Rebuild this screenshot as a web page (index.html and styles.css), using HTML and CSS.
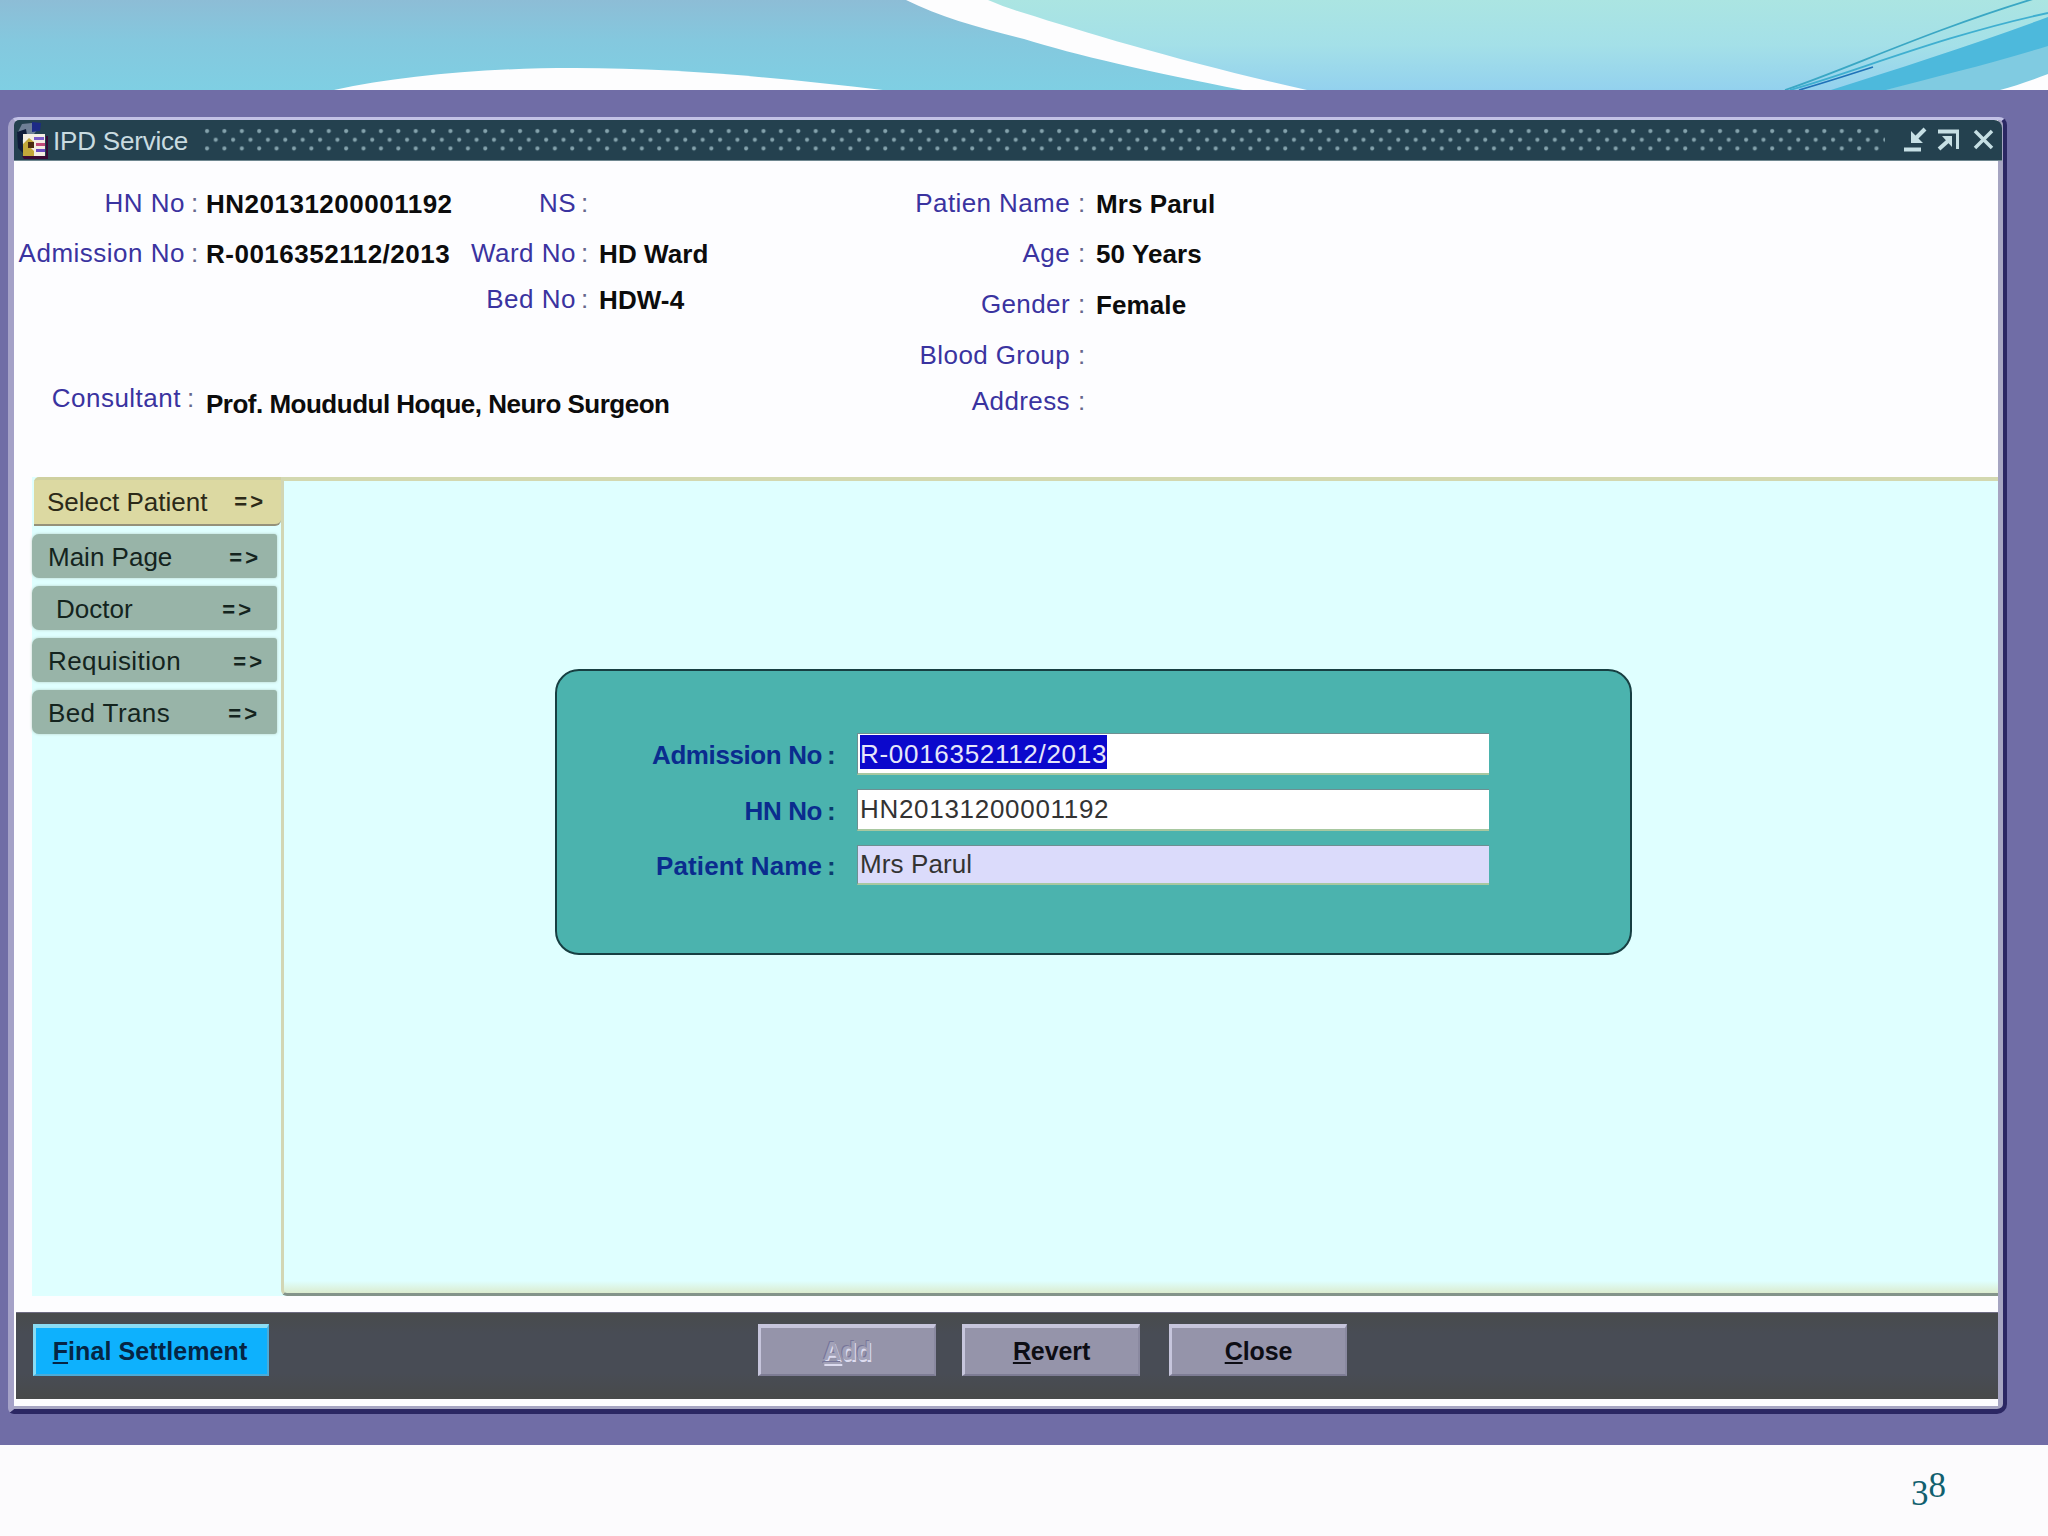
FILE: index.html
```html
<!DOCTYPE html>
<html lang="en">
<head>
    <meta charset="UTF-8">
    <title>IPD Service</title>
    <link rel="stylesheet" href="styles.css">
</head>
<body>
<!-- Slide banner -->
<svg class="banner" viewBox="0 0 2048 90" preserveAspectRatio="none">
    <defs>
        <linearGradient id="sea" x1="0" y1="0" x2="0" y2="1">
            <stop offset="0" stop-color="#8dbdd6"/>
            <stop offset="0.45" stop-color="#84c8de"/>
            <stop offset="1" stop-color="#7fcfe3"/>
        </linearGradient>
        <linearGradient id="sky" x1="0" y1="0" x2="0" y2="1">
            <stop offset="0" stop-color="#abe5e2"/>
            <stop offset="0.5" stop-color="#a4e0e8"/>
            <stop offset="1" stop-color="#93d1ee"/>
        </linearGradient>
    </defs>
    <rect width="2048" height="90" fill="url(#sea)"/>
    <path d="M906 0 C940 17 980 28 1024 39 C1075 55 1150 72 1243 90 H1310 V0 Z" fill="#fdfdfe"/>
    <path d="M988 0 C1000 5 1010 9 1024 13 C1090 34 1190 64 1307 90 H2048 V0 Z" fill="url(#sky)"/>
    <path d="M334 90 C400 76 480 68 575 68 C680 68 780 78 883 90 Z" fill="#fdfdfe"/>
    <path d="M1886 90 C1935 75 1990 62 2048 43 V90 Z" fill="#80cbe1"/>
    <path d="M1831 90 C1900 68 1975 44 2048 17 V46 C1990 64 1935 77 1886 90 Z" fill="#4db9dc"/>
    <path d="M2000 90 C2015 86 2030 81 2048 74 V90 Z" fill="#fdfdfe"/>
    <path d="M1785 90 C1845 70 1925 32 2033 -1" fill="none" stroke="#3aa7c4" stroke-width="1.8"/>
    <path d="M1790 90 C1850 74 1940 36 2048 13" fill="none" stroke="#3fafd0" stroke-width="1.8"/>
    <path d="M1799 90 C1820 84 1845 76 1873 67" fill="none" stroke="#1f72b8" stroke-width="1.8"/>
</svg>

<div class="desktop">
    <div class="window">
        <div class="title-bar">
            <svg class="app-icon" viewBox="0 0 36 40">
                <path d="M3 14 L8 4 L18 3 L24 9 L20 14 L8 18 Z" fill="#6f7f96"/>
                <path d="M18 2 L27 3 L26 11 L18 12 Z" fill="#1c2a86"/>
                <path d="M3 12 L12 9 L13 15 L8 20 L10 34 L4 28 Z" fill="#101c3a"/>
                <rect x="9" y="14" width="22" height="22" fill="#f4eee2"/>
                <path d="M9 36 V24 L15 18 L20 22 L15 26 L20 31 L20 36 Z" fill="#c2a83a"/>
                <path d="M14 22 h6 v6 h-6 z" fill="#4a2a10"/>
                <rect x="20" y="17" width="10" height="3" fill="#7a5ac8"/>
                <rect x="22" y="23" width="9" height="3" fill="#c04a78"/>
                <rect x="22" y="29" width="9" height="3" fill="#6a4ac0"/>
                <path d="M8 36 h24 v-20 h2 v23 h-24 z" fill="#3a0a34"/>
            </svg>
            <span class="title-text">IPD Service</span>
            <span class="title-dots"></span>
            <svg class="win-controls" viewBox="0 0 96 28">
                <g fill="none" stroke="#c6dfe4">
                    <path d="M25 2 L14 13" stroke-width="4"/>
                    <path d="M4 22.500 H21" stroke-width="4"/>
                    <path d="M38 4.500 H59" stroke-width="4"/>
                    <path d="M57.500 4 V22" stroke-width="3"/>
                    <path d="M39 22 L48 14" stroke-width="4"/>
                    <path d="M75 4 L92 21 M92 4 L75 21" stroke-width="3.500"/>
                </g>
                <path d="M11 4 V16 H23 Z M42 9 H52 V20 Z" fill="#c6dfe4"/>
            </svg>
        </div>

        <!-- Patient summary -->
        <div class="info">
            <div class="info-col info-left">
                <div class="field"><span class="name">HN No</span><span class="colon">:</span><span class="value">HN20131200001192</span></div>
                <div class="field"><span class="name">Admission No</span><span class="colon">:</span><span class="value">R-0016352112/2013</span></div>
                <div class="field consultant"><span class="name">Consultant</span><span class="colon">:</span><span class="value">Prof. Moududul Hoque, Neuro Surgeon</span></div>
            </div>
            <div class="info-col info-mid">
                <div class="field"><span class="name">NS</span><span class="colon">:</span></div>
                <div class="field"><span class="name">Ward No</span><span class="colon">:</span><span class="value">HD Ward</span></div>
                <div class="field bed"><span class="name">Bed No</span><span class="colon">:</span><span class="value">HDW-4</span></div>
            </div>
            <div class="info-col info-right">
                <div class="field"><span class="name">Patien Name</span><span class="colon">:</span><span class="value">Mrs Parul</span></div>
                <div class="field"><span class="name">Age</span><span class="colon">:</span><span class="value">50 Years</span></div>
                <div class="field gender"><span class="name">Gender</span><span class="colon">:</span><span class="value">Female</span></div>
                <div class="field"><span class="name">Blood Group</span><span class="colon">:</span></div>
                <div class="field address"><span class="name">Address</span><span class="colon">:</span></div>
            </div>
        </div>

        <div class="work">
            <div class="sidebar">
                <div class="tab active"><span>Select Patient</span><span class="arrow">=&gt;</span></div>
                <div class="tab main-page"><span>Main Page</span><span class="arrow">=&gt;</span></div>
                <div class="tab doctor"><span>Doctor</span><span class="arrow">=&gt;</span></div>
                <div class="tab requisition"><span>Requisition</span><span class="arrow">=&gt;</span></div>
                <div class="tab bed-trans"><span>Bed Trans</span><span class="arrow">=&gt;</span></div>
            </div>
            <div class="panel">
                <div class="card">
                    <div class="row"><span class="label">Admission No</span><span class="label-colon">:</span><div class="input"><span class="selected">R-0016352112/2013</span></div></div>
                    <div class="row"><span class="label">HN No</span><span class="label-colon">:</span><div class="input">HN20131200001192</div></div>
                    <div class="row last"><span class="label">Patient Name</span><span class="label-colon">:</span><div class="input readonly">Mrs Parul</div></div>
                </div>
            </div>
        </div>

        <div class="actions">
            <div class="btn settle"><span><u>F</u>inal Settlement</span></div>
            <div class="btn add"><span><u>A</u>dd</span></div>
            <div class="btn"><span><u>R</u>evert</span></div>
            <div class="btn"><span><u>C</u>lose</span></div>
        </div>
    </div>
</div>

<div class="page-number"><span class="low">3</span><span>8</span></div>
</body>
</html>
```
FILE: styles.css
```css
* {
    box-sizing: border-box;
}
body {
    margin: 0;
    width: 2048px;
    height: 1536px;
    overflow: hidden;
    background: #fcfbfd;
    font-family: "Liberation Sans", Arial, sans-serif;
    font-size: 26px;
    white-space: nowrap;
}
.banner {
    display: block;
    width: 2048px;
    height: 90px;
}
.desktop {
    height: 1355px;
    padding: 27px 41px 31px 8px;
    background: #706da6;
}
.window {
    display: flex;
    flex-direction: column;
    height: 1297px;
    padding: 0 5px 10px 0;
    border-style: solid;
    border-width: 3px 4px 5px 6px;
    border-color: #c3c2e6 #2b2763 #2b2763 #a5a2c8;
    border-radius: 10px 8px 10px 6px;
    background: linear-gradient(#fdfdff, #fdfdff) 0 0 / calc(100% - 5px) calc(100% - 3px) no-repeat, #a6a5c2;
}

/* Title bar */
.title-bar {
    display: flex;
    align-items: center;
    height: 41px;
    margin-right: -4px;
    padding-right: 6px;
    background: #24414f;
    border-bottom: 1px solid #6f8790;
    border-radius: 5px 8px 0 0;
}
.app-icon {
    width: 36px;
    height: 40px;
    flex: none;
}
.title-text {
    width: 153px;
    padding: 3px 0 0 3px;
    color: #c9dbe0;
    letter-spacing: -0.2px;
}
.title-dots {
    flex: 1;
    height: 27px;
    background:
        radial-gradient(circle at 4px 4px, #85a3ad 0 1.4px, transparent 2.6px) 0 0 / 17.4px 17.4px,
        radial-gradient(circle at 12.7px 12.7px, #85a3ad 0 1.4px, transparent 2.6px) 0 0 / 17.4px 17.4px;
}
.win-controls {
    width: 96px;
    height: 28px;
    margin: 2px 0 0 15px;
}

/* Patient summary */
.info {
    display: flex;
    height: 316px;
    padding-top: 17px;
}
.info-left {
    width: 448px;
}
.info-mid {
    width: 391px;
}
.field {
    display: flex;
    align-items: center;
    height: 50px;
}
.name {
    flex: none;
    color: #3a33a0;
    text-align: right;
    letter-spacing: 0.5px;
}
.info-left .name {
    width: 171px;
}
.info-mid .name {
    width: 114px;
}
.info-right .name {
    width: 217px;
    letter-spacing: 0.4px;
}
.colon {
    flex: none;
    width: 21px;
    padding-left: 6px;
    color: #66668c;
}
.info-mid .colon {
    width: 23px;
    padding-left: 5px;
}
.info-right .colon {
    width: 26px;
    padding-left: 8px;
}
.value {
    padding-top: 2px;
    color: #0c0c0c;
    font-weight: bold;
    letter-spacing: 0.1px;
}
.info-left .value {
    letter-spacing: 0.5px;
}
.info-left .consultant .value {
    padding-top: 13px;
    letter-spacing: -0.5px;
}
.info-left .consultant .name {
    width: 167px;
}
.info-left .consultant .colon {
    width: 25px;
}
.consultant {
    margin-top: 95px;
}
.bed {
    height: 42px;
}
.gender {
    height: 52px;
}
.address {
    height: 42px;
}

/* Tabs and work area */
.work {
    display: flex;
    height: 819px;
    margin-left: 18px;
    background: #dfffff;
}
.sidebar {
    width: 249px;
}
.tab {
    display: flex;
    align-items: center;
    justify-content: space-between;
    width: 245px;
    height: 44px;
    margin-bottom: 8px;
    padding: 3px 18px 0 16px;
    background: #98b4a8;
    border-radius: 7px 3px 3px 7px;
    box-shadow: 0 0 3px #b5d0c6;
    color: #14241e;
}
.tab.active {
    width: 247px;
    height: 49px;
    margin-left: 2px;
    padding: 0 17px 0 13px;
    background: #dcd9a2;
    border-top: 3px solid #cfd0a0;
    border-bottom: 2px solid #94917a;
    border-radius: 5px 0 6px 0;
    box-shadow: none;
    color: #2c2a18;
}
.tab.doctor {
    padding-left: 24px;
    padding-right: 25px;
}
.tab.requisition {
    padding-right: 14px;
    letter-spacing: 0.4px;
}
.tab.bed-trans {
    padding-right: 19px;
    letter-spacing: 0.4px;
}
.arrow {
    margin-right: -2px;
    font-size: 22px;
    font-weight: bold;
    letter-spacing: 3px;
}
.panel {
    flex: 1;
    padding: 188px 0 0 271px;
    border-top: 4px solid #d3d8b0;
    border-left: 3px solid #d2d6b4;
    border-bottom: 3px solid #84948a;
    border-bottom-left-radius: 6px;
    background: linear-gradient(#dfffff 98.500%, #dbeccf);
}
.card {
    width: 1077px;
    height: 286px;
    padding-top: 62px;
    background: #4bb3ae;
    border: 2px solid #173f42;
    border-radius: 24px;
}
.row {
    display: flex;
    align-items: center;
    height: 42px;
    margin-bottom: 14px;
}
.row.last {
    height: 40px;
}
.label {
    width: 265px;
    padding-top: 3px;
    color: #0a2c8e;
    font-weight: bold;
    text-align: right;
    letter-spacing: -0.4px;
}
.last .label {
    letter-spacing: 0.1px;
}
.label-colon {
    width: 35px;
    padding: 2px 0 0 5px;
    color: #0a3c6e;
    font-weight: bold;
}
.input {
    display: flex;
    align-items: center;
    width: 632px;
    height: 100%;
    padding-left: 2px;
    background: #fff;
    border-top: 1px solid #6d8f92;
    border-left: 1px solid #6d8f92;
    border-bottom: 2px solid #a8c8a0;
    color: #333;
    letter-spacing: 0.7px;
}
.selected {
    height: 34px;
    margin-top: -4px;
    line-height: 38px;
    background: #0b08cc;
    color: #e6e6fa;
}
.readonly {
    background: #dbdbfb;
    letter-spacing: 0.1px;
}

/* Bottom buttons */
.actions {
    display: flex;
    gap: 29px;
    height: 87px;
    margin: 16px 0 0 2px;
    padding: 11px 0 0 17px;
    background: linear-gradient(#484b4c, #484c55 25%, #484c55 70%, #484a4a);
    border-top: 1px solid #6c6a80;
}
.btn {
    display: flex;
    align-items: center;
    justify-content: center;
    width: 178px;
    height: 52px;
    background: #9594aa;
    border-top: 4px solid #c6c5dc;
    border-left: 3px solid #c6c5dc;
    border-bottom: 2px solid #7d7c94;
    border-right: 2px solid #8a89a0;
    color: #0d0d14;
    font-size: 25px;
    font-weight: bold;
    letter-spacing: -0.1px;
}
.btn u {
    text-decoration-thickness: 2px;
    text-underline-offset: 2px;
}
.settle {
    width: 236px;
    margin-right: 460px;
    padding-right: 3px;
    background: #0eb1fd;
    border-color: #8adcf4 #4cabd8 #4cabd8 #8adcf4;
    color: #052544;
    letter-spacing: 0.1px;
}
.add {
    margin-right: -3px;
    color: #a3a2b8;
    text-shadow: 1px 2px 0 #dddcf0, -1px -1px 0 #77769a;
}

.page-number {
    padding: 21px 102px 0 0;
    color: #11606f;
    font-family: "Liberation Serif", serif;
    font-size: 35px;
    text-align: right;
}
.low {
    position: relative;
    top: 8px;
}
```
